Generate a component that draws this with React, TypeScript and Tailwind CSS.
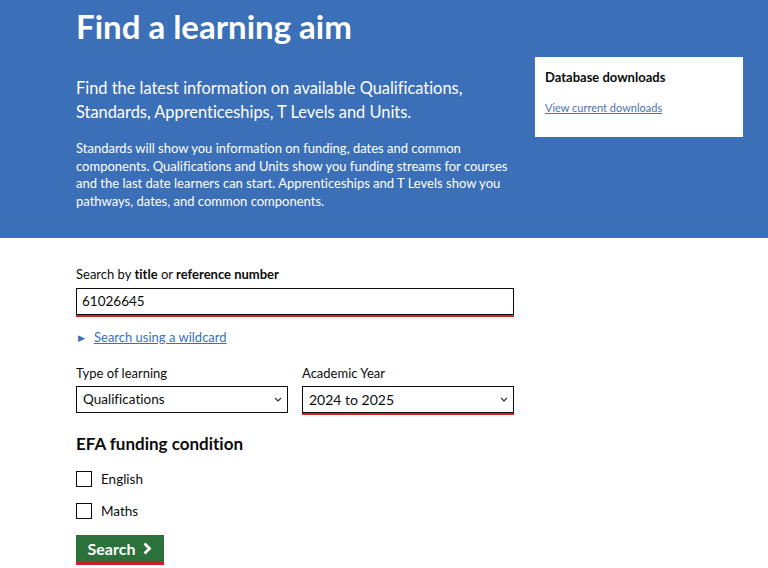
import React from 'react';

function Chevron() {
  return (
    <svg width="9" height="13" viewBox="0 0 9 13" className="ml-[8px]" aria-hidden="true">
      <path d="M1.5 1.5 L6.5 6.5 L1.5 11.5" fill="none" stroke="white" strokeWidth="2.8" />
    </svg>
  );
}

function SelectArrow() {
  return (
    <svg width="8" height="5" viewBox="0 0 8 5" aria-hidden="true">
      <path d="M1 1 L4 4 L7 1" fill="none" stroke="#333" strokeWidth="1.2" />
    </svg>
  );
}

export default function App() {
  return (
    <div
      className="min-h-[568px] bg-white text-[#0b0c0c] [font-variant-ligatures:none]"
      style={{ fontFamily: 'Lato, "Noto Sans", Arial, sans-serif' }}
    >
      <header className="bg-[#3b6fb8] h-[238px] pl-[76px] pr-[25px] flex text-white">
        <div className="w-[450px]">
          <h1 className="text-[33px] font-bold leading-none pt-[10px]">Find a learning aim</h1>
          <p className="mt-[33px] text-[16.4px] leading-[24px]">
            Find the latest information on available Qualifications, Standards, Apprenticeships, T Levels and Units.
          </p>
          <p className="mt-[16px] text-[13px] leading-[17.5px]">
            Standards will show you information on funding, dates and common components. Qualifications and Units show
            you funding streams for courses and the last date learners can start. Apprenticeships and T Levels show you
            pathways, dates, and common components.
          </p>
        </div>
        <div className="ml-auto mt-[57px] w-[208px] h-[80px] bg-white px-[10px] pt-[11px] self-start">
          <h2 className="text-[13px] font-bold text-[#0b0c0c]">Database downloads</h2>
          <a href="#" className="block mt-[12px] text-[11px] text-[#4a73b5] underline">View current downloads</a>
        </div>
      </header>

      <main className="ml-[76px] pt-[28px] w-[438px]">
        <label className="block text-[13px] leading-[16px]">
          Search by <b>title</b> or <b>reference number</b>
        </label>
        <div className="mt-[6px] relative">
          <div className="h-[27px] border-[1.5px] border-[#0b0c0c] flex items-center px-[5px] text-[13.5px]">61026645</div>
          <div className="absolute left-0 right-0 bottom-[-2px] h-[2px] bg-[#d4202a]" />
        </div>
        <div className="mt-[13px] flex items-center text-[13px]">
          <span className="text-[#3b6fb8] text-[9px] ml-[2px] mr-[9px]">&#9654;</span>
          <a href="#" className="text-[#3b6fb8] underline">Search using a wildcard</a>
        </div>

        <div className="mt-[17px] flex gap-[14px]">
          <div className="w-[212px]">
            <div className="text-[13px] leading-[16px]">Type of learning</div>
            <div className="mt-[5px] h-[27px] border-[1.5px] border-[#0b0c0c] flex items-center justify-between pl-[6px] pr-[5px] text-[13.5px]">
              <span>Qualifications</span>
              <SelectArrow />
            </div>
          </div>
          <div className="w-[212px] relative">
            <div className="text-[13px] leading-[16px]">Academic Year</div>
            <div className="mt-[5px] h-[27px] border-[1.5px] border-[#0b0c0c] flex items-center justify-between pl-[6px] pr-[5px] text-[14px]">
              <span>2024 to 2025</span>
              <SelectArrow />
            </div>
            <div className="absolute left-0 right-0 bottom-[-2px] h-[2px] bg-[#d4202a]" />
          </div>
        </div>

        <h2 className="mt-[21px] text-[17px] font-bold leading-[20px]">EFA funding condition</h2>
        <div className="mt-[15px] flex items-center gap-[9px] text-[13.5px]">
          <span className="w-[16px] h-[16px] border-[1.5px] border-[#0b0c0c]" />
          <span>English</span>
        </div>
        <div className="mt-[12px] flex items-center gap-[9px] text-[13.5px]">
          <span className="w-[16px] h-[16px] border-[1.5px] border-[#0b0c0c]" />
          <span>Maths</span>
        </div>
        <div className="mt-[14px] relative inline-block">
          <button className="h-[27px] w-[88px] bg-[#2b7139] text-white font-bold text-[16px] flex items-center justify-center">
            Search
            <Chevron />
          </button>
          <div className="absolute left-0 right-0 bottom-[-3px] h-[3px] bg-[#c8202a]" />
        </div>
      </main>
    </div>
  );
}
